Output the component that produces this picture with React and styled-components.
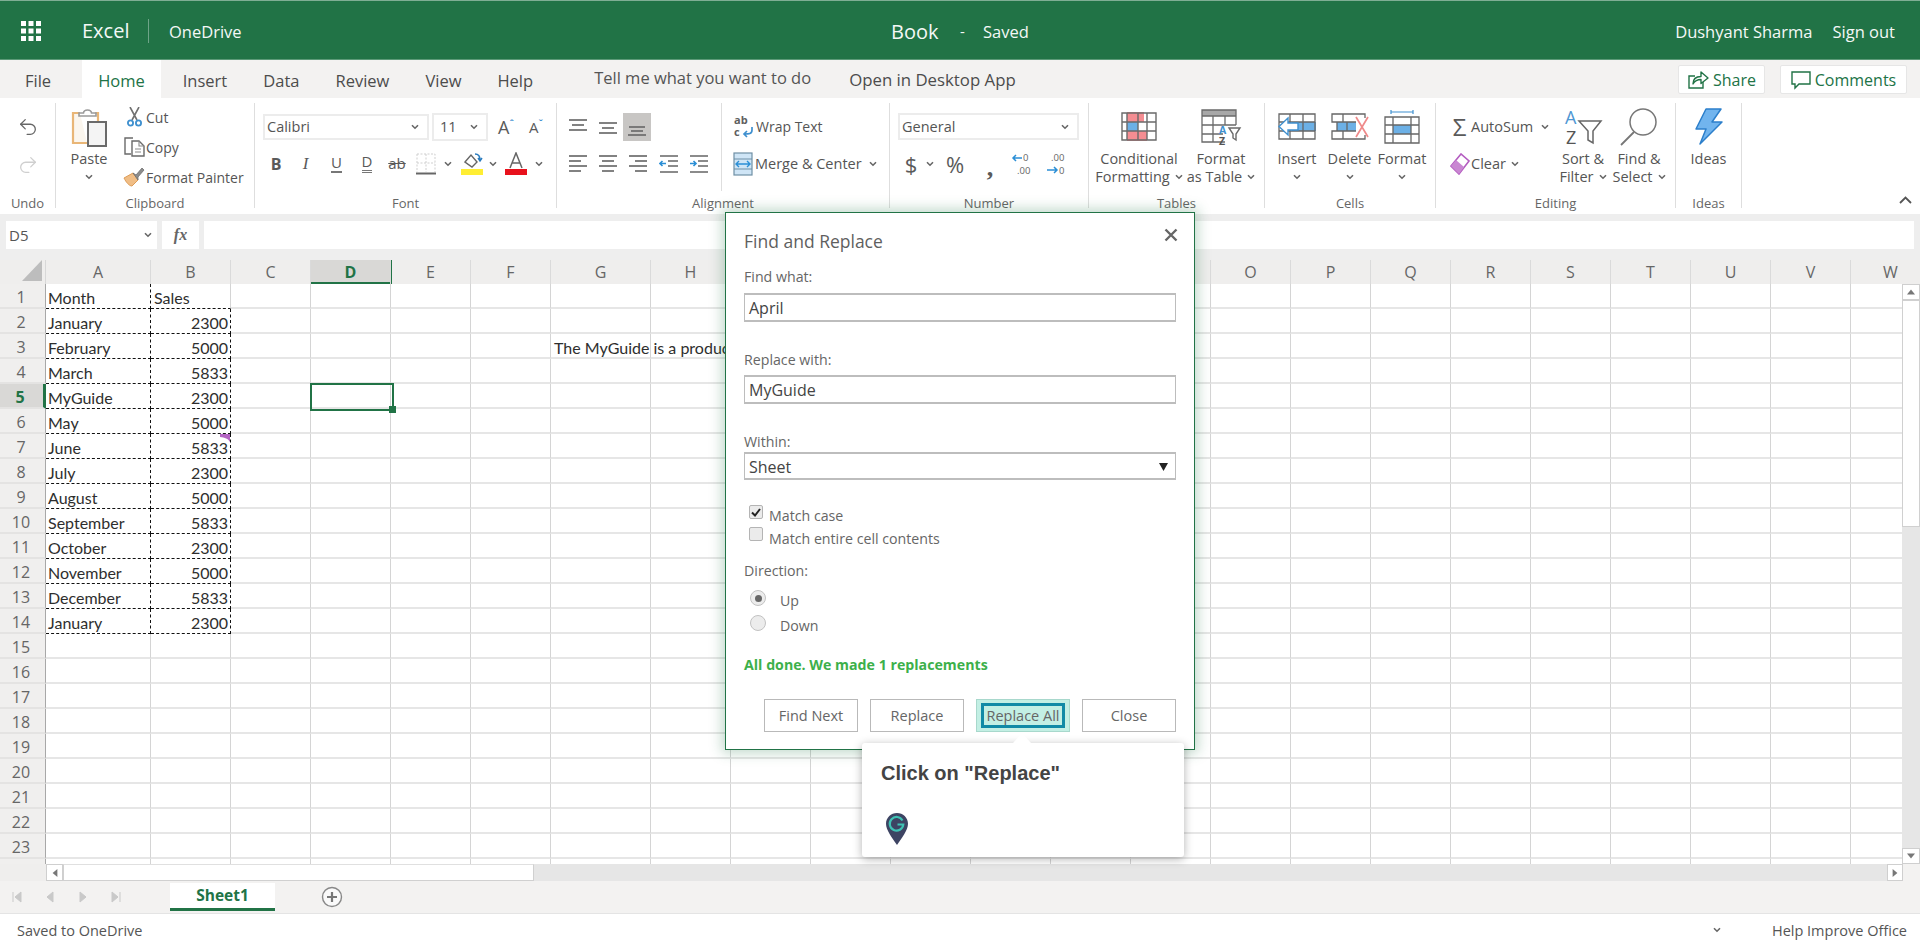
import React from "react";
import styled, { createGlobalStyle } from "styled-components";
import { Undo2, Redo2 } from "lucide-react";

const GREEN = "#217346";
const UI = `"Open Sans", "Noto Sans", sans-serif`;
const CELLFONT = `Lato, "Open Sans", sans-serif`;

const Global = createGlobalStyle`
  html, body { margin: 0; padding: 0; width: 1920px; height: 943px; overflow: hidden; background: #fff; }
  * { box-sizing: border-box; }
`;

const Page = styled.div`
  position: relative; width: 1920px; height: 943px; overflow: hidden;
  display: flex; flex-direction: column; font-family: ${UI}; color: #505050;
`;

/* ---------- title bar ---------- */
const TitleBar = styled.header`
  height: 60px; flex: none; background: ${GREEN}; border-top: 1px solid #7fae94;
  border-bottom: 1px solid #5c9a78;
  display: flex; align-items: center; color: #f4f8f6; padding: 2px 25px 0 21px;
`;
const Waffle = styled.svg` flex: none; margin-right: 41px; display: block; margin-top: -1px; `;
const AppName = styled.span` font-size: 20px; width: 67px; flex: none; border-right: 1px solid #6ea488; height: 24px; line-height: 24px; `;
const Place = styled.span` font-size: 16.5px; margin-left: 20px; width: 722px; flex: none; `;
const DocName = styled.span` font-size: 20px; width: 69px; flex: none; `;
const DocDash = styled.span` font-size: 15px; width: 23px; flex: none; `;
const DocState = styled.span` font-size: 16.5px; `;
const User = styled.span` font-size: 16.5px; margin-left: ${(p) => p.$ml || 0}px; white-space: nowrap; `;
const Spring = styled.span` flex: 1; `;

/* ---------- tabs ---------- */
const TabBar = styled.nav`
  height: 38px; flex: none; background: #f3f2f1; display: flex; align-items: stretch;
  padding: 0 13px 0 9px; font-size: 16.5px; color: #4c4c4c;
`;
const Tab = styled.span`
  padding: 2px 16px 0; margin-right: ${(p) => p.$mr ?? 4}px; margin-left: ${(p) => p.$ml || 0}px;
  display: flex; align-items: center; white-space: nowrap;
  background: ${(p) => (p.$active ? "#fff" : "transparent")};
  color: ${(p) => (p.$active ? GREEN : "inherit")};
`;
const TellMe = styled.span` margin-left: 41px; line-height: 36px; white-space: nowrap; width: 255px; color: #555; `;
const OpenDesktop = styled.span` line-height: 40px; white-space: nowrap; font-size: 16.8px; `;
const Pill = styled.span`
  height: 29px; margin-top: 5px; margin-left: ${(p) => p.$ml || 0}px; width: ${(p) => p.$w}px; flex: none;
  background: #fff; border: 1px solid #e6e6e6; border-radius: 2px; color: ${GREEN};
  display: flex; align-items: center; justify-content: center; gap: 4px; font-size: 16px; font-weight: 500;
`;

/* ---------- ribbon ---------- */
const Ribbon = styled.section`
  position: relative; height: 116px; flex: none; background: #fff; display: flex; padding-top: 5px; font-size: 14.5px; color: #555;
`;
const Group = styled.div`
  width: ${(p) => p.$w}px; flex: none; height: 105px; border-right: 1px solid #dedede;
  display: flex; flex-direction: column;
`;
const GroupBody = styled.div` height: 91px; flex: none; display: flex; `;
const GroupLabel = styled.div` height: 18px; line-height: 19px; font-size: 13px; text-align: center; color: #666; white-space: nowrap; `;
const Col = styled.div`
  display: flex; flex-direction: column; width: ${(p) => (p.$w ? p.$w + "px" : "auto")};
  flex: none; padding-top: ${(p) => p.$pt ?? 5}px; padding-left: ${(p) => p.$pl || 0}px;
`;
const SplitCol = styled(Col)` height: 88px; border-right: ${(p) => (p.$divide ? "1px solid #dedede" : "0")}; `;
const ToolRow = styled.div` height: 37px; display: flex; align-items: center; white-space: nowrap; `;
const Slot = styled.span`
  width: ${(p) => p.$w}px; flex: none; display: flex; align-items: center; justify-content: center; height: 28px;
  background: ${(p) => (p.$on ? "#c8c6c4" : "transparent")};
`;
const Select = styled.div`
  width: ${(p) => p.$w}px; height: ${(p) => p.$h || 26}px; margin-left: ${(p) => p.$ml || 0}px; flex: none;
  border: 2px solid #ececec; display: flex; align-items: center; justify-content: space-between;
  padding: 0 8px 0 2px; font-size: 14.5px; color: #555;
`;
const Glyph = styled.span`
  font-family: ${(p) => p.$family || UI}; font-size: ${(p) => p.$size || 15}px; font-weight: ${(p) => p.$weight || 400};
  font-style: ${(p) => (p.$italic ? "italic" : "normal")}; color: ${(p) => p.$color || "#5a5a5a"}; line-height: 1;
  text-decoration: ${(p) => p.$deco || "none"}; border-bottom: ${(p) => p.$under || "0"}; padding-bottom: ${(p) => (p.$under ? "1px" : "0")};
`;
const BigTool = styled.div`
  width: ${(p) => p.$w}px; margin-left: ${(p) => p.$ml || 0}px; flex: none; display: flex; flex-direction: column; align-items: center;
  text-align: center; line-height: 18px; white-space: nowrap;
`;
const BigIcon = styled.div` height: 47px; display: flex; align-items: center; justify-content: center; `;
const SmallTool = styled.div` height: 30px; display: flex; align-items: center; white-space: nowrap; font-size: 14px; `;
const SmallIcon = styled.span` width: 24px; flex: none; display: flex; align-items: center; justify-content: center; `;
const TextLabel = styled.span` margin-left: ${(p) => p.$ml || 0}px; margin-right: ${(p) => p.$mr || 0}px; `;
const Collapse = styled.span` position: absolute; right: 8px; bottom: 10px; display: flex; `;

/* ---------- formula bar ---------- */
const FormulaBar = styled.div`
  height: 46px; flex: none; background: #eeeeee; display: flex; gap: 5px; padding: 7px 6px 11px 6px;
`;
const NameBox = styled.div`
  width: 151px; flex: none; background: #fff; display: flex; align-items: center; justify-content: space-between;
  padding: 0 5px 0 3px; font-size: 15px; color: #555;
`;
const FxBox = styled.div`
  width: 37px; flex: none; background: #fff; display: flex; align-items: center; justify-content: center;
  font-family: "Liberation Serif", serif; font-style: italic; font-weight: 700; font-size: 16px; color: #666;
`;
const FormulaInput = styled.div` flex: 1; background: #fff; `;

/* ---------- grid ---------- */
const Sheet = styled.div` height: 604px; flex: none; display: flex; flex-direction: column; overflow: hidden; `;
const ColHeadRow = styled.div` height: 24px; flex: none; display: flex; background: #efeeed; overflow: hidden; `;
const Corner = styled.div`
  width: 46px; flex: none; display: flex; justify-content: flex-end; border-right: 1px solid #d8d8d8;
  padding: 0 3px 3px 0;
`;
const ColHead = styled.div`
  width: ${(p) => p.$w}px; flex: none; position: relative; text-align: center; font-size: 16px; line-height: 24px;
  color: ${(p) => (p.$on ? GREEN : "#666")}; font-weight: ${(p) => (p.$on ? 700 : 400)};
  background: ${(p) => (p.$on ? "#d9d8d6" : "transparent")};
  border-right: 1px solid #dadada;
  box-shadow: ${(p) => (p.$on ? `inset 0 -2px 0 ${GREEN}, 1px 0 0 ${GREEN}` : "none")};
`;
const SheetBody = styled.div` flex: 1; min-height: 0; display: flex; `;
const GridPane = styled.div` flex: 1; min-width: 0; overflow: hidden; `;
const Row = styled.div` height: 25px; display: flex; `;
const RowHead = styled.div`
  width: 46px; flex: none; text-align: center; padding-right: 3px; padding-top: 2px; font-size: 16px; line-height: 23px;
  background: ${(p) => (p.$on ? "#d9d8d6" : "#f0efee")}; color: ${(p) => (p.$on ? GREEN : "#666")}; font-weight: ${(p) => (p.$on ? 700 : 400)};
  border-bottom: 2px solid #e4e3e2;
  border-right: ${(p) => (p.$on ? `3px solid ${GREEN}` : "1px solid #a8a8a8")};
`;
const Cell = styled.div`
  position: relative; width: ${(p) => p.$w}px; flex: none; height: 25px;
  border-right: ${(p) => (p.$antRight ? "1px dashed #111" : "1px solid #d4d4d4")};
  border-bottom: ${(p) => (p.$antBottom ? "1px dashed #111" : "2px solid #e6e6e6")};
  font-family: ${CELLFONT}; font-size: 16px; line-height: 27px; color: #2e2e2e; white-space: nowrap;
  padding: 0 ${(p) => (p.$right ? "2px" : "3px")} 0 ${(p) => (p.$first ? "2px" : "3px")}; text-align: ${(p) => (p.$right ? "right" : "left")};
`;
const Selection = styled.div`
  position: absolute; top: -1px; left: -1px; right: -4px; bottom: -4px; border: 2px solid ${GREEN}; z-index: 2;
`;
const Handle = styled.span`
  position: absolute; right: -4px; bottom: -4px; width: 7px; height: 7px; background: ${GREEN};
`;
const InkMark = styled.svg` position: absolute; top: 0; right: 0; display: block; z-index: 2; `;

const VScroll = styled.div` width: 18px; flex: none; background: #e6e6e6; display: flex; flex-direction: column; `;
const VThumb = styled.div` height: 227px; flex: none; background: #fff; border: 1px solid #d0d0d0; `;
const ScrollBtn = styled.div`
  width: ${(p) => p.$w || 18}px; height: ${(p) => p.$h || 16}px; flex: none; background: #fff; border: 1px solid #cfcfcf;
  display: flex; align-items: center; justify-content: center; margin-top: ${(p) => (p.$auto ? "auto" : 0)};
`;
const HScroll = styled.div` height: 17px; flex: none; display: flex; background: #f3f2f1; `;
const HPad = styled.div` width: 46px; flex: none; background: #efeeed; `;
const HThumb = styled.div` width: 471px; flex: none; background: #fff; border: 1px solid #d0d0d0; border-top-color: #e0e0e0; `;
const HTrack = styled.div` width: 1353px; flex: none; background: #e6e6e6; `;

/* ---------- sheet tabs + status ---------- */
const SheetBar = styled.div`
  height: 33px; flex: none; background: #f3f2f1; border-bottom: 1px solid #e4e4e4; display: flex; align-items: flex-start; padding: 2px 0 0 0;
`;
const NavArrows = styled.div` width: 170px; flex: none; display: flex; padding: 8px 0 0 12px; gap: 23px; `;
const SheetTab = styled.div`
  width: 105px; height: 28px; flex: none; background: #fff; border-bottom: 3px solid ${GREEN}; color: ${GREEN};
  font-size: 15.5px; font-weight: 700; text-align: center; line-height: 25px;
`;
const AddSheet = styled.div` margin-left: 46px; margin-top: 3px; display: flex; `;
const StatusBar = styled.footer`
  height: 29px; flex: none; background: #fff; display: flex; align-items: center; font-size: 14.5px; color: #555; padding: 3px 13px 0 17px;
`;

/* ---------- dialog ---------- */
const Dialog = styled.div`
  position: absolute; left: 725px; top: 212px; width: 470px; height: 538px; z-index: 10; background: #fff;
  border: 1px solid ${GREEN}; box-shadow: 0 0 12px 3px rgba(33, 115, 70, .28);
  padding: 16px 18px 0 18px; display: flex; flex-direction: column; font-size: 14.2px; color: #666;
`;
const DialogHead = styled.div` display: flex; justify-content: space-between; align-items: flex-start; height: 24px; `;
const DialogTitle = styled.h2` margin: 0; font-size: 17.5px; font-weight: 400; line-height: 24px; color: #5f5f5f; `;
const CloseX = styled.svg` display: block; margin-top: -1px; margin-right: -2px; `;
const FieldLabel = styled.label` display: block; line-height: 20px; height: 20px; margin-top: ${(p) => p.$mt}px; `;
const Field = styled.div`
  height: ${(p) => p.$h || 29}px; flex: none; margin-top: ${(p) => p.$mt ?? 5}px; border: 1px solid #bdbdbd; border-top-width: 2px; border-bottom-width: 2px;
  display: flex; align-items: center; justify-content: space-between; padding: 1px 7px 0 4px; font-size: 16px; color: #444;
`;
const CheckRow = styled.div` display: flex; height: 23px; align-items: flex-start; padding-left: 5px; line-height: 23px; `;
const CheckBox = styled.span`
  width: 14px; height: 14px; flex: none; margin-top: ${(p) => p.$mt ?? 1}px; margin-right: 6px; border: 1px solid #b4b4b4; border-radius: 2px;
  background: #ebebeb; display: flex; align-items: center; justify-content: center;
`;
const RadioRow = styled.div` display: flex; height: 25px; align-items: flex-start; padding-left: 6px; line-height: 25px; `;
const Radio = styled.span`
  width: 16px; height: 16px; flex: none; margin-top: 2px; margin-right: 14px; border: 1px solid #c2c2c2; border-radius: 50%;
  background: #ececec; display: flex; align-items: center; justify-content: center;
  &::after { content: ""; width: 7px; height: 7px; border-radius: 50%; background: ${(p) => (p.$on ? "#666" : "transparent")}; }
`;
const Done = styled.div` margin-top: 17px; line-height: 20px; font-size: 14.2px; font-weight: 700; color: #3cb04a; `;
const Buttons = styled.div` margin-top: 24px; display: flex; justify-content: flex-end; gap: 12px; `;
const Button = styled.div`
  width: 94px; height: 33px; border: 1px solid ${(p) => (p.$focus ? "#a8d8cc" : "#b9b9b9")}; background: ${(p) => (p.$focus ? "#c3efe4" : "#fff")};
  display: flex; align-items: center; justify-content: center; font-size: 14.5px; color: #666;
  padding: ${(p) => (p.$focus ? "3px 4px" : 0)};
`;
const ButtonInner = styled.span`
  flex: 1; align-self: stretch; border: 3px solid #118aa6; display: flex; align-items: center; justify-content: center; white-space: nowrap;
`;

/* ---------- tooltip ---------- */
const Tip = styled.div`
  position: absolute; left: 862px; top: 743px; width: 322px; height: 114px; z-index: 11; background: #fff; border-radius: 3px;
  box-shadow: 0 2px 10px rgba(0, 0, 0, .3); padding: 18px 19px 0 19px;
  &::before {
    content: ""; position: absolute; left: 151px; top: -10px; width: 0; height: 0;
    border-left: 9px solid transparent; border-right: 9px solid transparent; border-bottom: 10px solid #fff;
  }
`;
const TipTitle = styled.div` font-family: "Liberation Sans", Arial, sans-serif; font-size: 20px; font-weight: 700; line-height: 24px; color: #444; `;
const TipLogo = styled.svg` display: block; margin: 28px 0 0 5px; `;

/* ---------- icons ---------- */
const Chev = ({ c = "#666", w = 8 }) => (
  <svg width={w} height="6" viewBox="0 0 8 6" style={{ display: "block", flex: "none" }}>
    <path d="M1 1.2 4 4.2 7 1.2" fill="none" stroke={c} strokeWidth="1.6" />
  </svg>
);
const Lines = ({ rows }) => (
  <svg width="20" height="22" viewBox="0 0 20 22" style={{ display: "block" }}>
    {rows.map(([x1, x2, y], i) => (
      <line key={i} x1={x1} x2={x2} y1={y} y2={y} stroke="#6c6c6c" strokeWidth="1.7" />
    ))}
  </svg>
);
const Indent = ({ flip }) => (
  <svg width="20" height="22" viewBox="0 0 20 22" style={{ display: "block" }}>
    {[[1, 19, 3], [9, 19, 8], [9, 19, 13], [1, 19, 19]].map(([a, b, y], i) => (
      <line key={i} x1={a} x2={b} y1={y} y2={y} stroke="#777" strokeWidth="1.7" />
    ))}
    <path d={flip ? "M1 10.5H7M4.5 8 7 10.5 4.5 13" : "M7 10.5H1M3.5 8 1 10.5 3.5 13"} fill="none" stroke="#2b8fd6" strokeWidth="1.6" />
  </svg>
);
const PasteIcon = () => (
  <svg width="36" height="40" viewBox="0 0 36 40" style={{ display: "block" }}>
    <path d="M9 6H2V36H16" fill="#fbf6ee" stroke="#e9b677" strokeWidth="2.2" />
    <path d="M24 6H27V14" fill="none" stroke="#e9b677" strokeWidth="2.2" />
    <path d="M8 9V6H12.5C13 2 20 2 20.5 6H25V9Z" fill="#fff" stroke="#9a9a9a" strokeWidth="1.6" />
    <rect x="17" y="15" width="18" height="24" fill="#f4f4f4" stroke="#6a6a6a" strokeWidth="2" />
  </svg>
);
const CutIcon = () => (
  <svg width="15" height="20" viewBox="0 0 15 20" style={{ display: "block" }}>
    <path d="M3 0 10 13M12 0 5 13" fill="none" stroke="#707070" strokeWidth="1.6" />
    <circle cx="3.5" cy="16" r="2.6" fill="none" stroke="#3f90cf" strokeWidth="1.8" />
    <circle cx="11.5" cy="16" r="2.6" fill="none" stroke="#3f90cf" strokeWidth="1.8" />
  </svg>
);
const CopyIcon = () => (
  <svg width="21" height="20" viewBox="0 0 21 20" style={{ display: "block" }}>
    <path d="M9 1H1V17H7" fill="none" stroke="#6a6a6a" strokeWidth="1.4" />
    <path d="M8 4H15L20 9V19H8Z" fill="#fff" stroke="#6a6a6a" strokeWidth="1.4" />
    <path d="M15 4V9H20M11 12H17M11 15H17" fill="none" stroke="#8a8a8a" strokeWidth="1.1" />
  </svg>
);
const PainterIcon = () => (
  <svg width="22" height="20" viewBox="0 0 22 20" style={{ display: "block" }}>
    <path d="M1 11 10 6 15 13 9 19C6 19 3 15 1 11Z" fill="#f0bd85" stroke="#dd9c57" strokeWidth="1" />
    <path d="M10 6 13 8 19 1 21 3 15 10 15 13Z" fill="#8c8c8c" stroke="#6f6f6f" strokeWidth=".8" />
  </svg>
);
const WrapIcon = () => (
  <svg width="20" height="26" viewBox="0 0 20 26" style={{ display: "block", overflow: "visible" }}>
    <text x="0" y="10" fontSize="11" fontWeight="700" fill="#5f5f5f" fontFamily="Open Sans">ab</text>
    <text x="0" y="22" fontSize="11" fontWeight="700" fill="#5f5f5f" fontFamily="Open Sans">c</text>
    <path d="M18 13V16C18 20 15 20 10 20M13 17 10 20 13 23" fill="none" stroke="#3f90cf" strokeWidth="1.7" />
  </svg>
);
const MergeIcon = () => (
  <svg width="20" height="24" viewBox="0 0 20 24" style={{ display: "block" }}>
    <rect x="1" y="1" width="18" height="22" fill="#cfe5f6" stroke="#6f8fa5" strokeWidth="1.2" />
    <path d="M1 7H19M1 17H19" stroke="#6f8fa5" strokeWidth="1.2" />
    <path d="M3 12H17M6 9 3 12 6 15M14 9 17 12 14 15" fill="none" stroke="#2b8fd6" strokeWidth="1.4" />
  </svg>
);
const DecimalIcon = ({ more }) => (
  <svg width="22" height="26" viewBox="0 0 22 26" style={{ display: "block", overflow: "visible" }}>
    <text x={more ? 12 : 6} y="10" fontSize="9.5" fill="#666" fontFamily="Open Sans">{more ? "0" : ".00"}</text>
    <text x={more ? 6 : 14} y="23" fontSize="9.5" fill="#666" fontFamily="Open Sans">{more ? ".00" : "0"}</text>
    {more ? <path d="M11 7H2M5 4 2 7 5 10" fill="none" stroke="#2b8fd6" strokeWidth="1.5" /> : <path d="M2 19H12M9 16 12 19 9 22" fill="none" stroke="#2b8fd6" strokeWidth="1.5" />}
  </svg>
);
const CondIcon = () => (
  <svg width="36" height="29" viewBox="0 0 36 29" style={{ display: "block" }}>
    <rect x="6" y="0" width="17" height="10" fill="#f58d92" />
    <rect x="6" y="10" width="11" height="9" fill="#6cb0e6" />
    <rect x="6" y="19" width="20" height="10" fill="#f58d92" />
    <path d="M1 1H35V28H1ZM6 1V28M17 1V28M26 1V28M1 10H35M1 19H35" fill="none" stroke="#6a6a6a" strokeWidth="1.4" />
  </svg>
);
const FormatTableIcon = () => (
  <svg width="40" height="36" viewBox="0 0 40 36" style={{ display: "block", overflow: "visible" }}>
    <rect x="1" y="1" width="34" height="6" fill="#a8a8a8" />
    <path d="M24 33H1V1H35V16M1 7H35M1 16H35M1 25H22M12 7V33M24 7V16" fill="none" stroke="#6a6a6a" strokeWidth="1.3" />
    <text x="18" y="25" fontSize="10.5" fontWeight="700" fill="#3f90cf" fontFamily="Open Sans">A</text>
    <text x="18" y="36" fontSize="10.5" fontWeight="700" fill="#555" fontFamily="Open Sans">Z</text>
    <path d="M28 19H39L35 25V31L32 29V25Z" fill="#fff" stroke="#6a6a6a" strokeWidth="1.4" />
  </svg>
);
const InsertIcon = () => (
  <svg width="38" height="27" viewBox="0 0 38 27" style={{ display: "block" }}>
    <rect x="14" y="9" width="24" height="9" fill="#6cb0e6" />
    <path d="M1 1H37V26H1ZM12 1V26M25 1V26M1 9H37M1 18H37" fill="none" stroke="#666" strokeWidth="1.3" />
    <path d="M10 5 1 13.5 10 22V17H20V10H10Z" fill="#fff" stroke="#3f90cf" strokeWidth="1.4" />
  </svg>
);
const DeleteIcon = () => (
  <svg width="38" height="27" viewBox="0 0 38 27" style={{ display: "block" }}>
    <rect x="6" y="9" width="19" height="9" fill="#6cb0e6" />
    <path d="M25 1H1V9H6M6 18H1V26H25M12 1V9M12 18V26M25 1H34V5M25 26H34V22M6 9V18M16 9V18M6 9H25M6 18H25" fill="none" stroke="#666" strokeWidth="1.3" />
    <path d="M25 4 37 24M37 4 25 24" stroke="#ef8a8a" strokeWidth="1.7" />
  </svg>
);
const FormatCellsIcon = () => (
  <svg width="36" height="34" viewBox="0 0 36 34" style={{ display: "block" }}>
    <path d="M7 2H29M7 0V4M29 0V4" stroke="#3f90cf" strokeWidth="1.2" fill="none" />
    <rect x="9" y="15" width="18" height="9" fill="#6cb0e6" />
    <path d="M1 7H35V33H1ZM9 7V33M27 7V33M1 15H35M1 24H35" fill="none" stroke="#666" strokeWidth="1.3" />
  </svg>
);
const EraserIcon = () => (
  <svg width="20" height="22" viewBox="0 0 20 22" style={{ display: "block" }}>
    <path d="M1 13 11 1 19 8 9 21Z" fill="#fff" stroke="#b45cc0" strokeWidth="1.6" />
    <path d="M1 13 6 7 14 14 9 21Z" fill="#c987d2" />
  </svg>
);
const SortIcon = () => (
  <svg width="37" height="36" viewBox="0 0 37 36" style={{ display: "block", overflow: "visible" }}>
    <text x="0" y="15" fontSize="18" fill="#4f97d4" fontFamily="Open Sans">A</text>
    <text x="1" y="35" fontSize="18" fill="#555" fontFamily="Open Sans">Z</text>
    <path d="M14 12H36L28 22V34L23 31V22Z" fill="#fff" stroke="#666" strokeWidth="1.5" />
  </svg>
);
const FindIcon = () => (
  <svg width="38" height="38" viewBox="0 0 38 38" style={{ display: "block" }}>
    <circle cx="23" cy="14" r="13" fill="#fff" stroke="#777" strokeWidth="1.5" />
    <path d="M14 24 1 37" stroke="#777" strokeWidth="1.8" />
  </svg>
);
const BoltIcon = () => (
  <svg width="28" height="37" viewBox="0 0 28 37" style={{ display: "block" }}>
    <path d="M11 1H26L17 14H27L5 36 11 21H1Z" fill="#71b4ee" stroke="#2c7fcb" strokeWidth="1.5" strokeLinejoin="round" />
  </svg>
);
const TriIcon = ({ dir, c = "#777", size = 8 }) => {
  const p = { up: "M0 6 5 0 10 6Z", down: "M0 0 5 6 10 0Z", left: "M6 0 0 5 6 10Z", right: "M0 0 6 5 0 10Z" }[dir];
  return <svg width={size} height={size} viewBox="0 0 10 10" style={{ display: "block" }}><path d={p} fill={c} transform={dir === "up" || dir === "down" ? "translate(0 2)" : "translate(2 0)"} /></svg>;
};
const NavIcon = ({ d }) => (
  <svg width="10" height="12" viewBox="0 0 10 12" style={{ display: "block" }}><path d={d} fill="#c9c9c9" stroke="#c9c9c9" /></svg>
);

const COLS = ["A", "B", "C", "D", "E", "F", "G", "H", "I", "J", "K", "L", "M", "N", "O", "P", "Q", "R", "S", "T", "U", "V", "W"];
const colW = (i) => (i === 0 ? 105 : i === 6 ? 100 : 80);
const DATA = [
  ["Month", "Sales"], ["January", 2300], ["February", 5000], ["March", 5833], ["MyGuide", 2300], ["May", 5000], ["June", 5833],
  ["July", 2300], ["August", 5000], ["September", 5833], ["October", 2300], ["November", 5000], ["December", 5833], ["January", 2300],
];

function GridRows() {
  return Array.from({ length: 24 }, (_, r) => (
    <Row key={r}>
      <RowHead $on={r === 4}>{r < 23 ? r + 1 : ""}</RowHead>
      {COLS.map((c, i) => {
        const inAnts = r < 14 && i < 2;
        let text = "";
        if (inAnts) text = DATA[r][i];
        if (r === 2 && i === 6) text = "The MyGuide is a product";
        return (
          <Cell key={c} $w={colW(i)} $first={i === 0} $right={typeof text === "number"}
            $antBottom={inAnts} $antRight={inAnts && (i === 0 || r > 0)}>
            {text}
            {r === 4 && i === 3 && <Selection><Handle /></Selection>}
            {r === 6 && i === 1 && (
              <InkMark width="10" height="8" viewBox="0 0 10 8"><path d="M0 0H10V8C8 4.5 5 3.5 0 3Z" fill="#b565c4" /></InkMark>
            )}
          </Cell>
        );
      })}
    </Row>
  ));
}

export default function App() {
  return (
    <Page>
      <Global />
      <TitleBar>
        <Waffle width="20" height="20" viewBox="0 0 20 20">
          {[0, 7.5, 15].flatMap((y) => [0, 7.5, 15].map((x) => <rect key={`${x}-${y}`} x={x} y={y} width="5" height="5" fill="#fff" />))}
        </Waffle>
        <AppName>Excel</AppName>
        <Place>OneDrive</Place>
        <DocName>Book</DocName>
        <DocDash>-</DocDash>
        <DocState>Saved</DocState>
        <Spring />
        <User>Dushyant Sharma</User>
        <User $ml={20}>Sign out</User>
      </TitleBar>

      <TabBar>
        <Tab $mr={15}>File</Tab>
        <Tab $active $mr={6}>Home</Tab>
        <Tab>Insert</Tab>
        <Tab>Data</Tab>
        <Tab>Review</Tab>
        <Tab>View</Tab>
        <Tab>Help</Tab>
        <TellMe>Tell me what you want to do</TellMe>
        <OpenDesktop>Open in Desktop App</OpenDesktop>
        <Spring />
        <Pill $w={87}>
          <svg width="22" height="20" viewBox="0 0 22 20" style={{ display: "block" }}>
            <path d="M8 6H2V18H16V11" fill="none" stroke={GREEN} strokeWidth="1.4" />
            <path d="M6 14C6 9 9 6.5 14 6.5V2L21 8 14 13.5V9.5C11 9.5 8 10.5 6 14Z" fill="#fff" stroke={GREEN} strokeWidth="1.4" strokeLinejoin="round" />
          </svg>
          Share
        </Pill>
        <Pill $w={127} $ml={15}>
          <svg width="20" height="20" viewBox="0 0 20 20" style={{ display: "block" }}>
            <path d="M1 2H19V14H8L4 18V14H1Z" fill="none" stroke={GREEN} strokeWidth="1.4" />
          </svg>
          Comments
        </Pill>
      </TabBar>

      <Ribbon>
        <Group $w={56}>
          <GroupBody>
            <Col $w={55}>
              <ToolRow><Slot $w={55}><Undo2 size={22} strokeWidth={1.4} color="#666" /></Slot></ToolRow>
              <ToolRow style={{ paddingTop: 3 }}><Slot $w={55}><Redo2 size={22} strokeWidth={1.4} color="#cfcfcf" /></Slot></ToolRow>
            </Col>
          </GroupBody>
          <GroupLabel>Undo</GroupLabel>
        </Group>

        <Group $w={199}>
          <GroupBody>
            <BigTool $w={50} $ml={8}>
              <BigIcon><PasteIcon /></BigIcon>
              Paste
              <Slot $w={50} style={{ height: 18 }}><Chev /></Slot>
            </BigTool>
            <Col $pt={0} $pl={8} style={{ marginTop: -1 }}>
              <SmallTool><SmallIcon><CutIcon /></SmallIcon>Cut</SmallTool>
              <SmallTool><SmallIcon><CopyIcon /></SmallIcon>Copy</SmallTool>
              <SmallTool><SmallIcon><PainterIcon /></SmallIcon>Format Painter</SmallTool>
            </Col>
          </GroupBody>
          <GroupLabel>Clipboard</GroupLabel>
        </Group>

        <Group $w={302}>
          <GroupBody>
            <Col $pl={8}>
              <ToolRow>
                <Select $w={166}>Calibri<Chev /></Select>
                <Select $w={56} $ml={3} $h={28} style={{ paddingLeft: 6 }}>11<Chev /></Select>
                <Slot $w={36}><Glyph $size={18}>A<Glyph $size={9} $color="#3f90cf" $weight={700} style={{ verticalAlign: 8 }}>ˆ</Glyph></Glyph></Slot>
                <Slot $w={24}><Glyph $size={15}>A<Glyph $size={9} $color="#3f90cf" $weight={700} style={{ verticalAlign: 7 }}>ˇ</Glyph></Glyph></Slot>
              </ToolRow>
              <ToolRow style={{ marginLeft: -1 }}>
                <Slot $w={28}><Glyph $weight={700} $size={16}>B</Glyph></Slot>
                <Slot $w={31}><Glyph $italic $family='"Liberation Serif", serif' $size={17}>I</Glyph></Slot>
                <Slot $w={31}><Glyph $size={15} $under="2px solid #777">U</Glyph></Slot>
                <Slot $w={30}><Glyph $size={15} $under="3px double #777">D</Glyph></Slot>
                <Slot $w={30}><Glyph $size={15} $deco="line-through">ab</Glyph></Slot>
                <Slot $w={28}>
                  <svg width="20" height="22" viewBox="0 0 20 22" style={{ display: "block" }}>
                    <path d="M1 1H19V19M1 1V19M10 1V19M1 10H19" fill="none" stroke="#cfcfcf" strokeWidth="1" strokeDasharray="2 1.5" />
                    <path d="M0 20.5H20" stroke="#666" strokeWidth="2" />
                  </svg>
                </Slot>
                <Slot $w={16}><Chev /></Slot>
                <Slot $w={32}>
                  <svg width="22" height="24" viewBox="0 0 22 24" style={{ display: "block" }}>
                    <path d="M4 10 10 3 16 10 11 15Z" fill="#fff" stroke="#666" strokeWidth="1.4" />
                    <path d="M14 2C18 2 19 5 19 8M17 6 19 9 21 6" fill="none" stroke="#2a7cbf" strokeWidth="1.5" />
                    <rect x="0" y="17" width="22" height="6" fill="#ffee33" />
                  </svg>
                </Slot>
                <Slot $w={10}><Chev /></Slot>
                <Slot $w={36}>
                  <svg width="22" height="24" viewBox="0 0 22 24" style={{ display: "block" }}>
                    <path d="M5 16 11 1 17 16M7.5 11H14.5" fill="none" stroke="#666" strokeWidth="1.5" />
                    <rect x="0" y="17" width="22" height="6" fill="#e8111c" />
                  </svg>
                </Slot>
                <Slot $w={10}><Chev /></Slot>
              </ToolRow>
            </Col>
          </GroupBody>
          <GroupLabel>Font</GroupLabel>
        </Group>

        <Group $w={333}>
          <GroupBody>
            <SplitCol $w={165} $divide $pl={6}>
              <ToolRow>
                <Slot $w={30}><Lines rows={[[1, 19, 4], [4, 16, 9], [1, 19, 14]]} /></Slot>
                <Slot $w={30}><Lines rows={[[1, 19, 7], [4, 16, 12], [1, 19, 17]]} /></Slot>
                <Slot $w={28} $on><Lines rows={[[2, 18, 11], [4, 16, 15], [1, 19, 19]]} /></Slot>
              </ToolRow>
              <ToolRow>
                <Slot $w={30}><Lines rows={[[1, 19, 3], [1, 13, 8], [1, 19, 13], [1, 13, 18]]} /></Slot>
                <Slot $w={30}><Lines rows={[[1, 19, 3], [4, 16, 8], [1, 19, 13], [4, 16, 18]]} /></Slot>
                <Slot $w={30}><Lines rows={[[1, 19, 3], [7, 19, 8], [1, 19, 13], [7, 19, 18]]} /></Slot>
                <Slot $w={32}><Indent /></Slot>
                <Slot $w={28}><Indent flip /></Slot>
              </ToolRow>
            </SplitCol>
            <Col $pl={9}>
              <ToolRow style={{ fontSize: 14 }}><Slot $w={25}><WrapIcon /></Slot>Wrap Text</ToolRow>
              <ToolRow>
                <Slot $w={23}><MergeIcon /></Slot>
                <TextLabel $ml={1} $mr={7}>Merge &amp; Center</TextLabel>
                <Chev />
              </ToolRow>
            </Col>
          </GroupBody>
          <GroupLabel>Alignment</GroupLabel>
        </Group>

        <Group $w={199}>
          <GroupBody>
            <Col $pl={8}>
              <ToolRow><Select $w={181} $h={27}>General<Chev /></Select></ToolRow>
              <ToolRow>
                <Slot $w={26}><Glyph $size={22}>$</Glyph></Slot>
                <Slot $w={12}><Chev /></Slot>
                <Slot $w={38}><Glyph $size={22}>%</Glyph></Slot>
                <Slot $w={32}><Glyph $size={26} $weight={700} $family='"Liberation Serif", serif' style={{ marginTop: 8 }}>,</Glyph></Slot>
                <Slot $w={32}><DecimalIcon more /></Slot>
                <Slot $w={36}><DecimalIcon /></Slot>
              </ToolRow>
            </Col>
          </GroupBody>
          <GroupLabel>Number</GroupLabel>
        </Group>

        <Group $w={176}>
          <GroupBody>
            <BigTool $w={88} $ml={6}>
              <BigIcon><CondIcon /></BigIcon>
              Conditional
              <ToolRow style={{ height: 18, gap: 5 }}>Formatting <Chev /></ToolRow>
            </BigTool>
            <BigTool $w={76}>
              <BigIcon><FormatTableIcon /></BigIcon>
              Format
              <ToolRow style={{ height: 18, gap: 5 }}>as Table <Chev /></ToolRow>
            </BigTool>
          </GroupBody>
          <GroupLabel>Tables</GroupLabel>
        </Group>

        <Group $w={171}>
          <GroupBody>
            <BigTool $w={52} $ml={6}>
              <BigIcon><InsertIcon /></BigIcon>
              Insert
              <Slot $w={50} style={{ height: 18 }}><Chev /></Slot>
            </BigTool>
            <BigTool $w={53}>
              <BigIcon><DeleteIcon /></BigIcon>
              Delete
              <Slot $w={50} style={{ height: 18 }}><Chev /></Slot>
            </BigTool>
            <BigTool $w={52}>
              <BigIcon><FormatCellsIcon /></BigIcon>
              Format
              <Slot $w={50} style={{ height: 18 }}><Chev /></Slot>
            </BigTool>
          </GroupBody>
          <GroupLabel>Cells</GroupLabel>
        </Group>

        <Group $w={240}>
          <GroupBody>
            <Col $w={117} $pl={12}>
              <ToolRow>
                <Slot $w={23}><Glyph $size={24}>Σ</Glyph></Slot>
                <TextLabel $mr={8}>AutoSum</TextLabel>
                <Chev />
              </ToolRow>
              <ToolRow>
                <Slot $w={23}><EraserIcon /></Slot>
                <TextLabel $mr={5}>Clear</TextLabel>
                <Chev />
              </ToolRow>
            </Col>
            <BigTool $w={60}>
              <BigIcon><SortIcon /></BigIcon>
              Sort &amp;
              <ToolRow style={{ height: 18, gap: 5 }}>Filter <Chev /></ToolRow>
            </BigTool>
            <BigTool $w={52}>
              <BigIcon><FindIcon /></BigIcon>
              Find &amp;
              <ToolRow style={{ height: 18, gap: 5 }}>Select <Chev /></ToolRow>
            </BigTool>
          </GroupBody>
          <GroupLabel>Editing</GroupLabel>
        </Group>

        <Group $w={66}>
          <GroupBody>
            <BigTool $w={65}>
              <BigIcon><BoltIcon /></BigIcon>
              Ideas
            </BigTool>
          </GroupBody>
          <GroupLabel>Ideas</GroupLabel>
        </Group>

        <Collapse>
          <svg width="13" height="8" viewBox="0 0 13 8" style={{ display: "block" }}>
            <path d="M1 7 6.5 1.5 12 7" fill="none" stroke="#555" strokeWidth="1.8" />
          </svg>
        </Collapse>
      </Ribbon>

      <FormulaBar>
        <NameBox>D5<Chev /></NameBox>
        <FxBox>fx</FxBox>
        <FormulaInput />
      </FormulaBar>

      <Sheet>
        <ColHeadRow>
          <Corner>
            <svg width="20" height="21" viewBox="0 0 20 21" style={{ display: "block" }}><path d="M0 21 20 0V21Z" fill="#bdbdbd" /></svg>
          </Corner>
          {COLS.map((c, i) => <ColHead key={c} $w={colW(i)} $on={c === "D"}>{c}</ColHead>)}
        </ColHeadRow>
        <SheetBody>
          <GridPane><GridRows /></GridPane>
          <VScroll>
            <ScrollBtn><TriIcon dir="up" /></ScrollBtn>
            <VThumb />
            <ScrollBtn $auto><TriIcon dir="down" /></ScrollBtn>
          </VScroll>
        </SheetBody>
      </Sheet>

      <HScroll>
        <HPad />
        <ScrollBtn $w={17} $h={17}><TriIcon dir="left" /></ScrollBtn>
        <HThumb />
        <HTrack />
        <ScrollBtn $w={16} $h={17}><TriIcon dir="right" /></ScrollBtn>
      </HScroll>

      <SheetBar>
        <NavArrows>
          <NavIcon d="M1 1V11M9 1 3 6 9 11Z" />
          <NavIcon d="M8 1 2 6 8 11Z" />
          <NavIcon d="M2 1 8 6 2 11Z" />
          <NavIcon d="M9 1V11M1 1 7 6 1 11Z" />
        </NavArrows>
        <SheetTab>Sheet1</SheetTab>
        <AddSheet>
          <svg width="22" height="22" viewBox="0 0 22 22" style={{ display: "block" }}>
            <circle cx="11" cy="11" r="9.5" fill="#fafafa" stroke="#888" strokeWidth="1.4" />
            <path d="M11 6V16M6 11H16" stroke="#777" strokeWidth="2.2" />
          </svg>
        </AddSheet>
      </SheetBar>

      <StatusBar>
        Saved to OneDrive
        <Spring />
        <Chev />
        <TextLabel $ml={51}>Help Improve Office</TextLabel>
      </StatusBar>

      <Dialog>
        <DialogHead>
          <DialogTitle>Find and Replace</DialogTitle>
          <CloseX width="14" height="14" viewBox="0 0 14 14"><path d="M1.5 1.5 12.5 12.5M12.5 1.5 1.5 12.5" stroke="#666" strokeWidth="2.4" /></CloseX>
        </DialogHead>
        <FieldLabel $mt={14}>Find what:</FieldLabel>
        <Field $mt={6}>April</Field>
        <FieldLabel $mt={28}>Replace with:</FieldLabel>
        <Field>MyGuide</Field>
        <FieldLabel $mt={28}>Within:</FieldLabel>
        <Field $mt={0} $h={28}>
          Sheet
          <svg width="9" height="8" viewBox="0 0 9 8" style={{ display: "block" }}><path d="M0 0H9L4.5 8Z" fill="#222" /></svg>
        </Field>
        <CheckRow style={{ marginTop: 24 }}>
          <CheckBox>
            <svg width="10" height="9" viewBox="0 0 10 9" style={{ display: "block" }}><path d="M1 4.5 4 7.5 9 1" fill="none" stroke="#222" strokeWidth="2" /></svg>
          </CheckBox>
          Match case
        </CheckRow>
        <CheckRow><CheckBox $mt={0} />Match entire cell contents</CheckRow>
        <FieldLabel $mt={11}>Direction:</FieldLabel>
        <RadioRow style={{ marginTop: 7 }}><Radio $on />Up</RadioRow>
        <RadioRow><Radio />Down</RadioRow>
        <Done>All done. We made 1 replacements</Done>
        <Buttons>
          <Button>Find Next</Button>
          <Button>Replace</Button>
          <Button $focus><ButtonInner>Replace All</ButtonInner></Button>
          <Button>Close</Button>
        </Buttons>
      </Dialog>

      <Tip>
        <TipTitle>Click on "Replace"</TipTitle>
        <TipLogo width="22" height="32" viewBox="0 0 22 32">
          <path d="M11 0C5 0 0 4.7 0 10.8 0 17 6 25 11 32 16 25 22 17 22 10.8 22 4.7 17 0 11 0Z" fill="#3d4463" />
          <path d="M16.5 7.5A6.8 6.8 0 1 0 17.3 11.5H11.5" fill="none" stroke="#3fc2b4" strokeWidth="2.2" />
        </TipLogo>
      </Tip>
    </Page>
  );
}
